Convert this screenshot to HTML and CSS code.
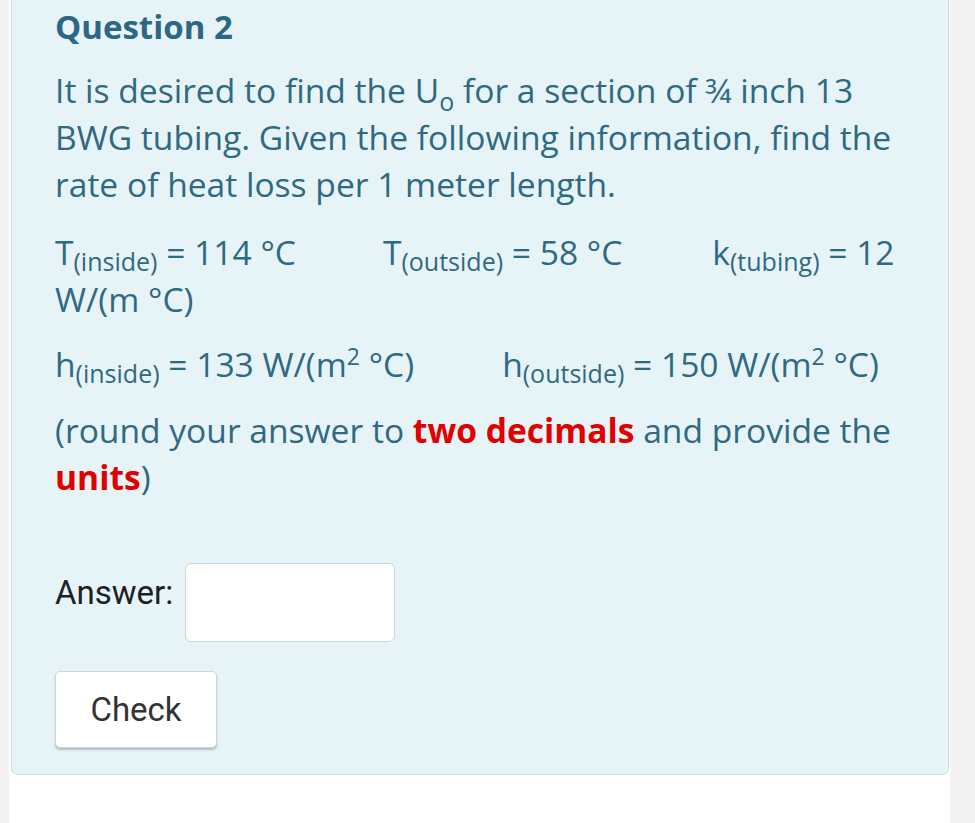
FILE: index.html
```html
<!DOCTYPE html>
<html>
<head>
<meta charset="utf-8">
<link rel="stylesheet" href="styles.css">
</head>
<body>
<div class="page">
  <div class="card">
    <h2 class="qtitle">Question 2</h2>
    <p class="para p1">It is desired to find the U<sub class="so">o</sub> for a section of ¾ inch 13 BWG tubing. Given the following information, find the rate of heat loss per 1 meter length.</p>
    <p class="para p2">T<sub>(inside)</sub> = 114 °C<span class="gap g1"></span>T<sub>(outside)</sub> = 58 °C<span class="gap g2"></span>k<sub>(tubing)</sub> = 12 W/(m °C)</p>
    <p class="para p3">h<sub>(inside)</sub> = 133 W/(m<sup>2</sup> °C)<span class="gap g3"></span>h<sub>(outside)</sub> = 150 W/(m<sup>2</sup> °C)</p>
    <p class="para p4">(round your answer to <strong class="red">two decimals</strong> and provide the <strong class="red">units</strong>)</p>
    <div class="answer-row">
      <label class="ans-label">Answer:</label>
      <input class="ans-input" type="text">
    </div>
    <button class="check-btn">Check</button>
  </div>
</div>
</body>
</html>
```
FILE: styles.css
```css
html, body {
  margin: 0;
  padding: 0;
}
body {
  background: #f3f3f3;
  height: 823px;
  overflow: hidden;
}
.page {
  margin-left: 9px;
  width: 941px;
  min-height: 823px;
  background: #ffffff;
}
.card {
  margin: 0 1px 0 2px;
  background: #e7f4f7;
  border: 1px solid #c4e2e9;
  border-top: none;
  border-radius: 0 0 7px 7px;
  padding: 7px 30px 26px 43px;
  font-family: "Open Sans", "Liberation Sans", sans-serif;
  color: #2f6982;
}
.qtitle {
  margin: 0;
  font-size: 33px;
  line-height: 40px;
  font-weight: 700;
  color: #2c6784;
}
.para {
  margin: 0;
  font-size: 33.6px;
  line-height: 47px;
}
.p1 { margin-top: 20px; }
.p2 { margin-top: 21px; }
.p3 { margin-top: 18px; }
.p4 { margin-top: 19px; }
sub {
  font-size: 25px;
  line-height: 0;
  vertical-align: -6px;
}
sub.so {
  vertical-align: -8px;
}
sup {
  font-size: 23px;
  line-height: 0;
  vertical-align: 12px;
}
.gap {
  display: inline-block;
}
.g1 { width: 87px; }
.g2 { width: 90px; }
.g3 { width: 88px; }
.red {
  color: #e10000;
  font-weight: 700;
}
.answer-row {
  display: flex;
  align-items: center;
  margin-top: 62px;
}
.ans-label {
  font-family: Roboto, "Liberation Sans", sans-serif;
  font-size: 33px;
  color: #1d2125;
  margin-right: 12px;
  position: relative;
  top: -10px;
}
.ans-input {
  width: 210px;
  height: 79px;
  box-sizing: border-box;
  border: 1px solid #ced4da;
  border-radius: 6px;
  background: #fff;
  margin: 0;
  padding: 0;
}
.check-btn {
  display: block;
  margin-top: 29px;
  width: 162px;
  height: 77px;
  background: #ffffff;
  border: 1px solid #cfd3d6;
  border-radius: 5px;
  box-shadow: 0 2px 2px rgba(0,0,0,0.22);
  font-family: Roboto, "Liberation Sans", sans-serif;
  font-size: 33px;
  color: #333333;
  padding: 0;
}
```
